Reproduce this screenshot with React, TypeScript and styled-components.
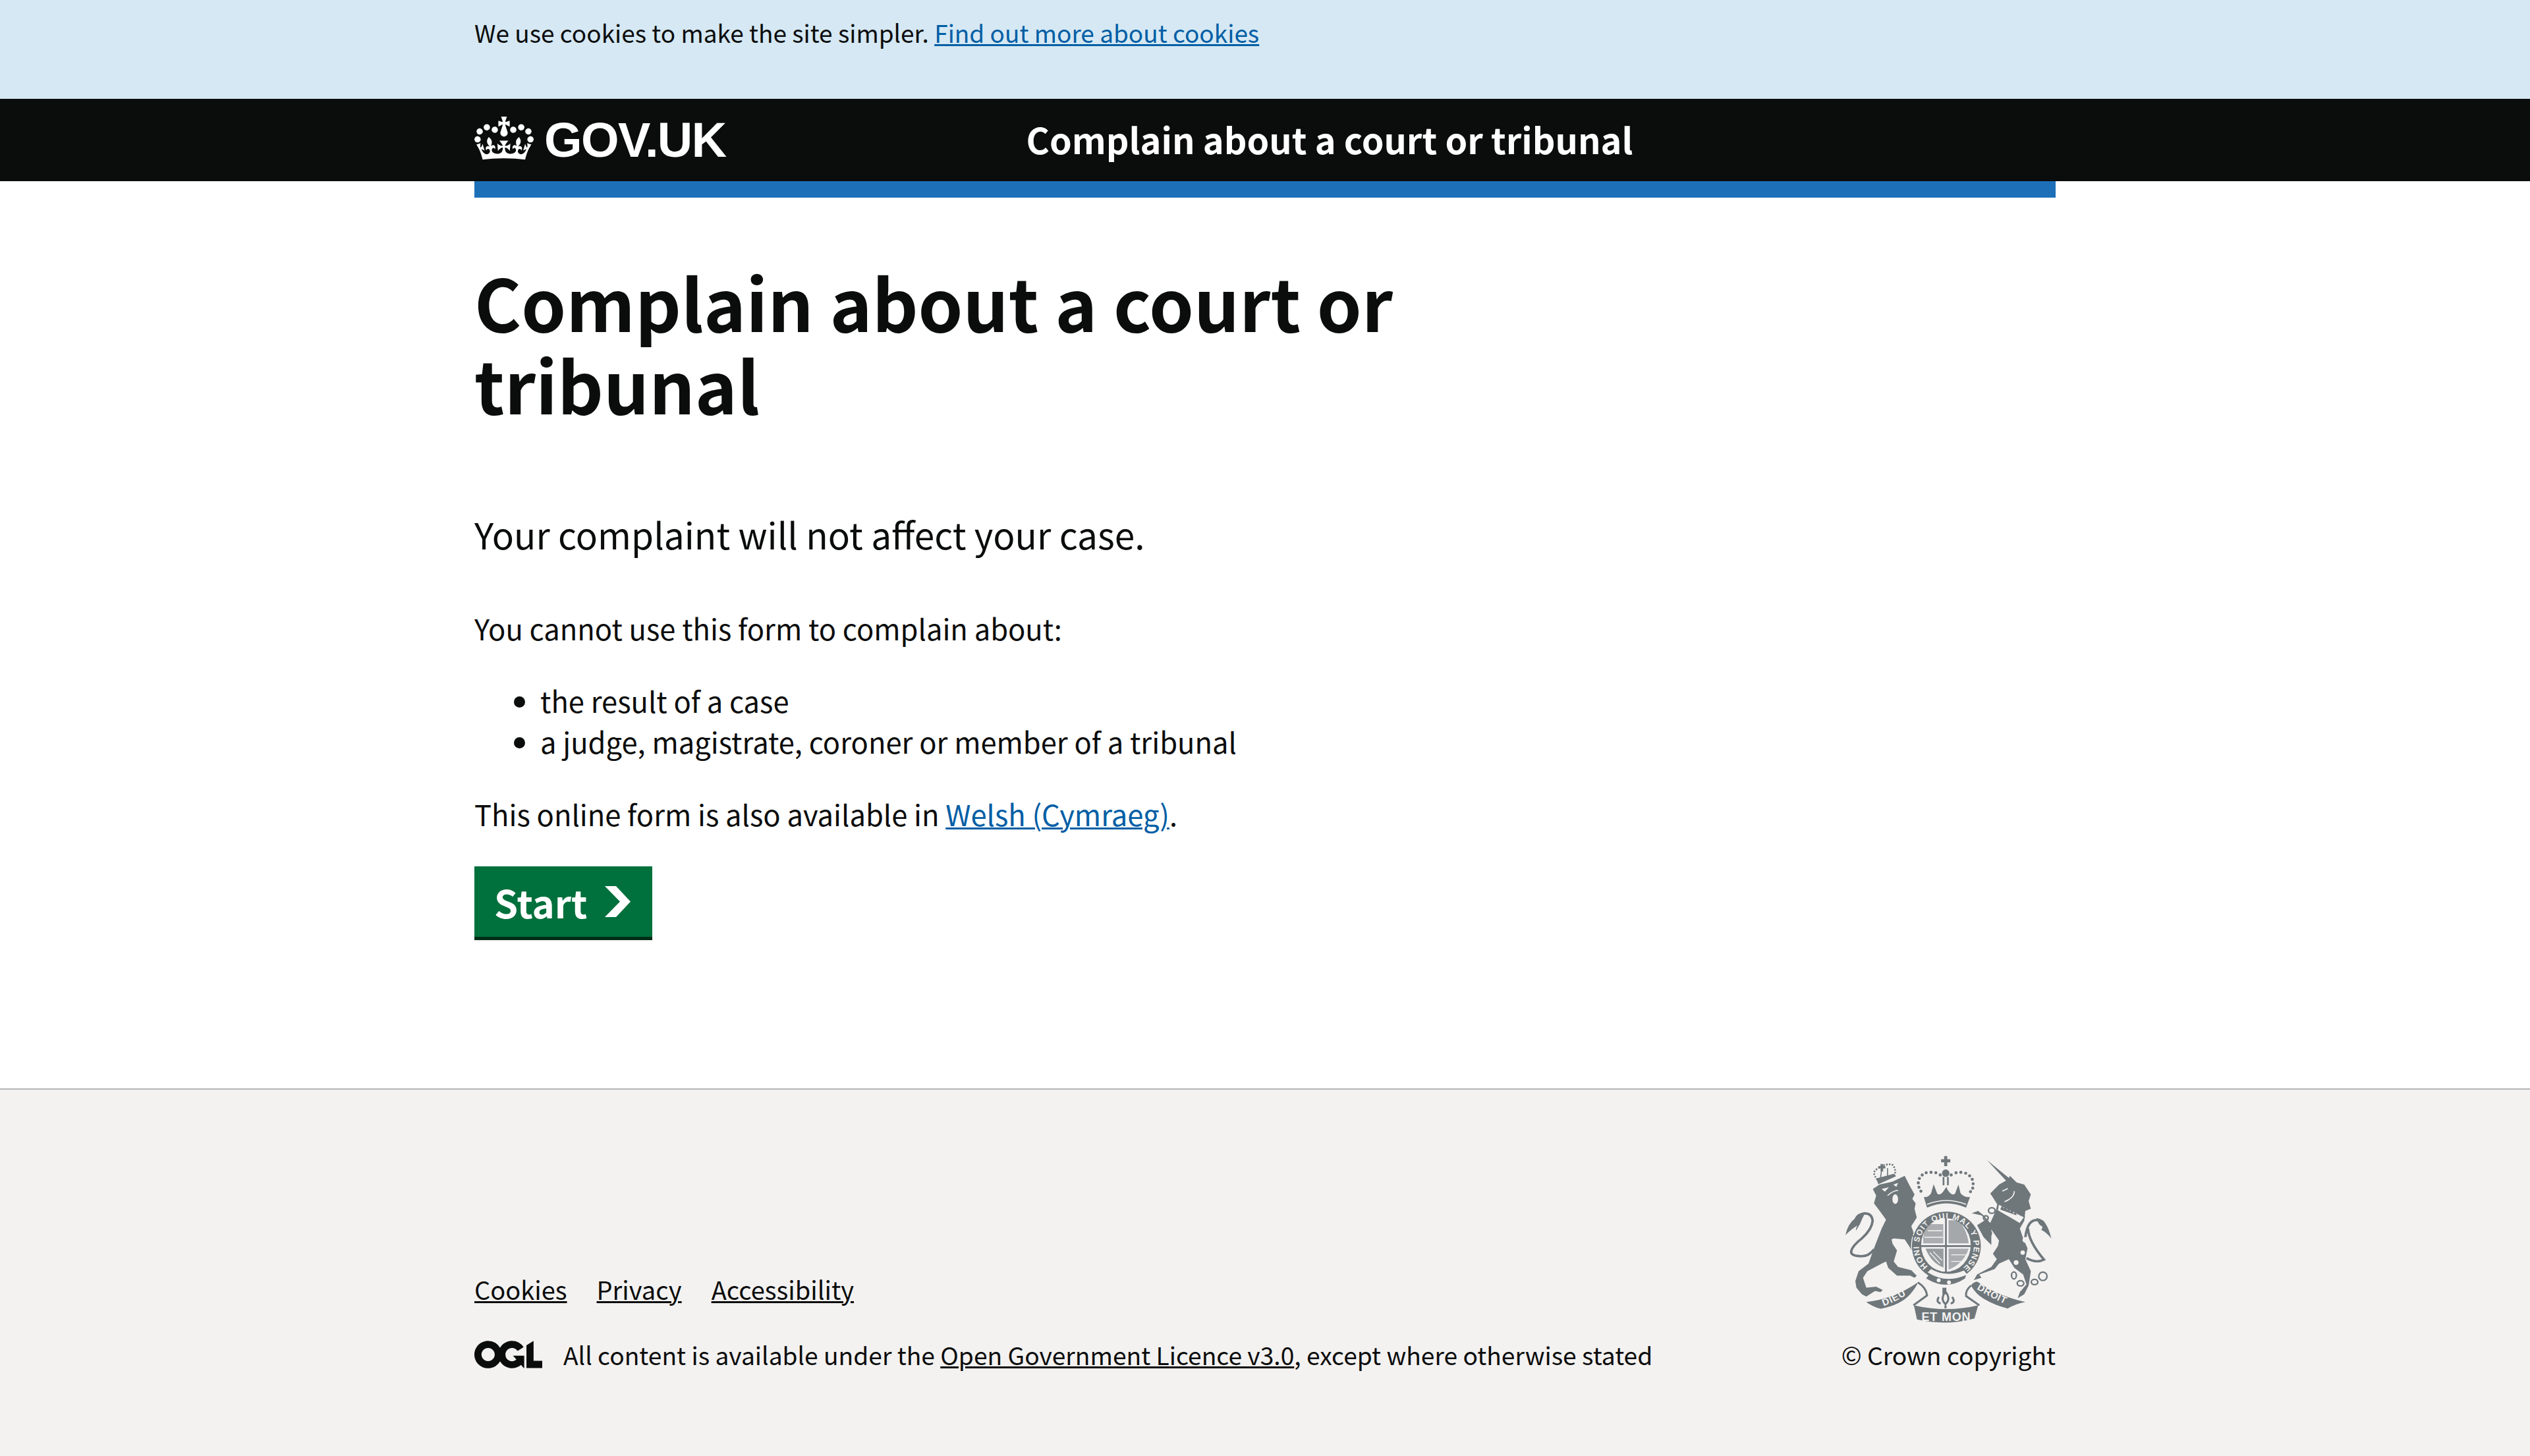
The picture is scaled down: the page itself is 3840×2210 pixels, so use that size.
import React from 'react';
import styled, { createGlobalStyle } from 'styled-components';

const GlobalStyle = createGlobalStyle`
  html, body { margin: 0; padding: 0; background: #f3f2f1; }
  body { font-family: 'Noto Sans CJK SC', 'Noto Sans', Arial, sans-serif; color: #0b0c0c; }
`;

const CROWN =
  'M25 30.2c3.5 1.5 7.7-.2 9.1-3.7 1.5-3.6-.2-7.8-3.9-9.2-3.6-1.4-7.6.3-9.1 3.9-1.4 3.5.3 7.5 3.9 9zM9 39.5c3.6 1.5 7.8-.2 9.2-3.7 1.5-3.6-.2-7.8-3.9-9.1-3.6-1.5-7.6.2-9.1 3.8-1.4 3.5.3 7.5 3.8 9zM4.4 57.2c3.5 1.5 7.7-.2 9.1-3.8 1.5-3.6-.2-7.7-3.9-9.1-3.5-1.5-7.6.3-9.1 3.8-1.4 3.5.3 7.6 3.9 9.1zm38.3-21.4c3.5 1.5 7.7-.2 9.1-3.8 1.5-3.6-.2-7.7-3.9-9.1-3.6-1.5-7.6.3-9.1 3.8-1.3 3.6.4 7.7 3.9 9.1zm64.4-5.6c-3.6 1.5-7.8-.2-9.1-3.7-1.5-3.6.2-7.8 3.8-9.2 3.6-1.4 7.7.3 9.2 3.9 1.3 3.5-.4 7.5-3.9 9zm15.9 9.3c-3.6 1.5-7.7-.2-9.1-3.7-1.5-3.6.2-7.8 3.7-9.1 3.6-1.5 7.7.2 9.2 3.8 1.5 3.5-.3 7.5-3.8 9zm4.7 17.7c-3.6 1.5-7.8-.2-9.2-3.8-1.5-3.6.2-7.7 3.9-9.1 3.6-1.5 7.7.3 9.2 3.8 1.3 3.5-.4 7.6-3.9 9.1zM89.3 35.8c-3.6 1.5-7.8-.2-9.2-3.8-1.4-3.6.2-7.7 3.9-9.1 3.6-1.5 7.7.3 9.2 3.8 1.4 3.6-.3 7.7-3.9 9.1zM69.7 17.7l8.9 4.7V9.3l-8.9 2.8c-.2-.3-.5-.6-.9-.9L72.4 0H59.6l3.5 11.2c-.3.3-.6.5-.9.9l-8.8-2.8v13.1l8.8-4.7c.3.3.6.7.9.9l-5 15.4v.1c-.2.8-.4 1.6-.4 2.4 0 4.1 3.1 7.5 7 8.1h.2c.3 0 .7.1 1 .1.4 0 .7 0 1-.1h.2c4-.6 7.1-4.1 7.1-8.1 0-.8-.1-1.7-.4-2.4V34l-5.1-15.4c.4-.2.7-.6 1-.9zM66 92.8c16.9 0 32.8 1.1 47.1 3.2 4-16.9 8.9-26.7 14-33.5l-9.6-3.4c1 4.9 1.1 7.2 0 10.2-1.5-1.4-3-4.3-4.2-8.7L108.6 76c2.8-2 5-3.2 7.5-3.3-4.4 9.4-10 11.9-13.6 11.2-4.3-.8-6.3-4.6-5.6-7.9 1-4.7 5.7-5.9 8-.5 4.3-8.7-3-11.4-7.6-8.8 7.1-7.2 7.9-13.5 2.1-21.1-8 6.1-8.1 12.3-4.5 20.8-4.7-5.4-12.1-2.5-9.5 6.2 3.4-5.2 7.9-2 7.2 3.1-.6 4.3-6.4 7.8-13.5 7.2-10.3-.9-10.9-8-11.2-13.8 2.5-.5 7.1 1.8 11 7.3L80.2 60c-4.1 4.4-8 5.3-12.3 5.4 1.4-4.4 8-11.6 8-11.6H55.5s6.4 7.2 7.9 11.6c-4.2-.1-8-1-12.3-5.4l1.4 16.4c3.9-5.5 8.5-7.7 10.9-7.3-.3 5.8-.9 12.8-11.1 13.8-7.2.6-12.9-2.9-13.5-7.2-.7-5 3.8-8.3 7.1-3.1 2.7-8.7-4.6-11.6-9.4-6.2 3.7-8.5 3.6-14.7-4.6-20.8-5.8 7.6-5 13.9 2.2 21.1-4.7-2.6-11.9.1-7.7 8.8 2.3-5.5 7.1-4.2 8.1.5.7 3.3-1.3 7.1-5.7 7.9-3.5.7-9-1.8-13.5-11.2 2.5.1 4.7 1.3 7.5 3.3l-4.7-15.4c-1.2 4.4-2.7 7.2-4.3 8.7-1.1-3-.9-5.3 0-10.2l-9.5 3.4c5 6.9 9.9 16.7 14 33.5 14.8-2.1 30.8-3.2 47.7-3.2z';

const OGL =
  'M421.5 142.8V.1l-50.7 32.3v161.1h112.4v-50.7zm-122.3-9.6A47.12 47.12 0 0 1 221 97.8c0-26 21.1-47.1 47.1-47.1 16.7 0 31.4 8.7 39.7 21.8l42.7-27.2A97.63 97.63 0 0 0 268.1 0c-36.5 0-68.3 20.1-85.1 49.7A98 98 0 0 0 97.8 0C43.9 0 0 43.9 0 97.8s43.9 97.8 97.8 97.8c36.5 0 68.3-20.1 85.1-49.7a97.76 97.76 0 0 0 149.6 25.4l19.4 22.2h3v-87.8h-80l24.3 27.5zM97.8 145c-26 0-47.1-21.1-47.1-47.1s21.1-47.1 47.1-47.1 47.2 21 47.2 47S123.8 145 97.8 145';

const footerLinks = ['Cookies', 'Privacy', 'Accessibility'];
const exclusions = ['the result of a case', 'a judge, magistrate, coroner or member of a tribunal'];

const ARMS = '#6f777b';
const PAPER = '#f3f2f1';

// beads along the crown arches
const beads = [
  [612, 196], [592, 186], [570, 184], [548, 186], [530, 196], [517, 212], [512, 232], [515, 252], [524, 270],
  [662, 196], [684, 186], [706, 184], [728, 188], [746, 200], [758, 216], [762, 236], [760, 256], [750, 272],
];

function CoatOfArms() {
  return (
    <ArmsSvg viewBox="180 108 940 765" xmlns="http://www.w3.org/2000/svg">
      {/* lion tail */}
      <path
        fill="none"
        stroke={ARMS}
        strokeWidth="11"
        d="M310 535 Q285 570 245 566 Q205 565 206 545 Q210 520 255 485 Q300 445 304 405 Q300 368 262 372"
      />
      <path fill={ARMS} d="M272 364 Q232 368 222 395 Q190 420 180 470 Q208 442 235 426 Q226 440 228 450 Q248 420 258 392 Z" />
      {/* lion */}
      <path
        fill={ARMS}
        d="M305 260 L335 240 L395 226 L450 200 L470 240 L495 285 L485 305 L500 325 L495 350 L505 390 L480 430 L510 510 L515 550 L490 555 L470 520 L450 490 L400 485 L390 490 L395 510 L415 540 L400 590 L420 615 L480 630 L505 655 L495 665 L475 655 L415 655 L375 620 L365 590 L345 600 L280 635 L260 665 L275 710 L320 705 L350 720 L340 730 L315 725 L275 750 L255 740 L230 710 L225 680 L240 635 L285 600 L310 530 L345 440 L365 400 L340 365 L310 325 L320 290 Z"
      />
      <path fill={PAPER} d="M345 260 L378 252 L360 272 Z M398 240 L420 232 L412 250 Z" />
      <ellipse cx="407" cy="306" rx="13" ry="22" fill={PAPER} />
      <path fill="none" stroke={PAPER} strokeWidth="4" d="M372 290 Q395 268 420 266" />
      {/* lion crown */}
      <path fill="none" stroke={ARMS} strokeWidth="8" strokeDasharray="7 6" d="M326 218 Q298 185 322 170 Q365 140 395 150 Q415 175 402 200" />
      <path fill={ARMS} d="M330 238 L320 212 L402 190 L410 202 Z M340 146 h12 v10 h10 v10 h-10 v14 h-12 v-14 h-10 v-10 h10 Z" />
      <path fill="none" stroke={ARMS} strokeWidth="5" d="M340 208 L345 172 M372 200 L372 165" />

      {/* unicorn tail */}
      <path
        fill="none"
        stroke={ARMS}
        strokeWidth="11"
        d="M1000 480 Q1010 395 1058 402 M1012 440 Q1015 500 1085 582 Q1050 600 1005 575"
      />
      <path fill={ARMS} d="M1050 392 Q1085 398 1092 418 Q1108 442 1118 485 Q1095 455 1072 446 Q1080 440 1076 430 Q1060 425 1050 392 Z" />
      {/* unicorn */}
      <path
        fill={ARMS}
        d="M825 128 L925 210 L930 200 L960 230 L995 240 L1025 285 L1015 315 L1025 350 L1000 360 L995 405 L975 440 L990 485 L1010 530 L1000 580 L1025 635 L1015 700 L995 740 L965 758 L975 730 L1005 695 L990 650 L950 620 L925 580 L880 600 L860 625 L790 650 L800 665 L765 675 L780 650 L845 615 L870 580 L852 555 L875 520 L880 495 L845 445 L845 515 L810 480 L780 425 L820 400 L800 380 L755 370 L785 360 L810 380 L840 415 L865 360 L872 330 L850 295 L840 280 L880 240 L912 222 Z"
      />
      <path fill="none" stroke={PAPER} strokeWidth="5" d="M950 270 Q950 300 905 318 M895 270 L920 258" />
      <path fill={PAPER} stroke={ARMS} strokeWidth="5" d="M878 328 L872 358 L975 418 L996 388 Z" />
      <path fill={ARMS} d="M888 346 l8 -12 6 14 8 -10 6 16 10 -8 4 16 10 -6 6 16 10 -6 4 14 -74 -26 Z" />
      <g fill={PAPER}>
        <circle cx="958" cy="595" r="11" />
        <circle cx="988" cy="550" r="10" />
        <circle cx="1000" cy="492" r="13" />
      </g>
      {/* chain links */}
      <g fill="none" stroke={ARMS} strokeWidth="7">
        <ellipse cx="847" cy="358" rx="15" ry="13" />
        <ellipse cx="820" cy="392" rx="11" ry="10" />
        <ellipse cx="830" cy="462" rx="15" ry="14" />
        <ellipse cx="948" cy="654" rx="11" ry="16" />
        <ellipse cx="978" cy="690" rx="15" ry="12" />
        <ellipse cx="1042" cy="684" rx="15" ry="12" />
        <circle cx="1080" cy="658" r="19" />
      </g>

      {/* shield and garter */}
      <circle cx="640" cy="520" r="161" fill={PAPER} />
      <circle cx="640" cy="520" r="157" fill={ARMS} />
      <path fill="none" stroke={ARMS} strokeWidth="5" d="M450 420 L525 530" />
      <defs>
        <path id="garter" d="M 556 613 A 125 125 0 1 1 724 613" />
        <path id="dieu" d="M 345 797 Q 420 770 490 722" />
        <path id="droit" d="M 778 716 Q 850 760 945 800" />
      </defs>
      <text fill={PAPER} fontFamily="'Liberation Sans', sans-serif" fontWeight="700" fontSize="37">
        <textPath href="#garter" textLength="610" lengthAdjust="spacing">
          HONI SOIT QUI MAL Y PENSE
        </textPath>
      </text>
      <ellipse cx="638" cy="515" rx="113" ry="122" fill={PAPER} />
      <g fill={ARMS}>
        <path d="M634 393 h8 v248 h-8 Z M525 516 h228 v8 h-228 Z" />
        <path d="M550 420 h76 v88 h-92 Q532 460 550 420 Z" opacity="0.55" />
        <path d="M650 403 h40 q40 30 52 105 h-92 Z" opacity="0.6" />
        <path d="M545 532 h82 v86 q-55 -20 -82 -86 Z" opacity="0.7" />
        <path d="M650 532 h92 q-25 70 -92 96 Z" opacity="0.55" />
      </g>
      <path fill="none" stroke={PAPER} strokeWidth="4" d="M555 450 h66 M540 480 h84 M662 560 h66 M662 590 h56 M565 550 L610 600 M580 545 L620 585" />
      {/* garter buckle */}
      <path fill={PAPER} d="M555 640 Q640 695 735 650 L720 632 Q640 665 570 625 Z" />
      <path fill={ARMS} d="M548 668 Q640 725 725 668 L730 652 Q640 695 562 648 Z" />
      <circle cx="605" cy="676" r="9" fill={PAPER} />
      <circle cx="652" cy="686" r="9" fill={PAPER} />

      {/* royal crown */}
      <path
        fill={ARMS}
        d="M537 296 L552 345 Q640 305 730 345 L748 296 Q725 300 705 280 L695 240 L680 280 Q665 295 645 262 L640 250 L632 262 Q612 295 598 280 L582 238 L570 280 Q555 300 537 296 Z"
      />
      <path fill="none" stroke={PAPER} strokeWidth="5" d="M552 330 Q640 295 730 330" />
      <g fill={ARMS}>
        {beads.map(([cx, cy]) => (
          <circle key={`${cx}-${cy}`} cx={cx} cy={cy} r="7" />
        ))}
        <rect x="623" y="205" width="8" height="38" />
        <rect x="643" y="205" width="8" height="38" />
        <circle cx="637" cy="188" r="17" />
        <path d="M630 110 h14 v14 h14 v14 h-14 v18 h-14 v-18 h-14 v-14 h14 Z" />
      </g>

      {/* motto ribbon */}
      <g fill={ARMS}>
        <path d="M275 775 Q400 762 510 686 Q505 705 475 740 Q430 790 340 806 Q300 795 275 775 Z" />
        <path d="M1000 775 Q880 750 780 682 Q760 686 752 700 Q775 740 810 760 Q860 790 920 805 Q950 785 1000 775 Z" />
        <path d="M492 790 Q640 825 785 790 L768 850 Q640 885 506 855 Z" />
      </g>
      <path fill="none" stroke={ARMS} strokeWidth="9" d="M510 686 Q548 710 552 745 L490 790 M752 700 Q725 725 730 748 L790 790" />
      <path fill={ARMS} d="M622 710 h18 v30 h-18 Z" />
      <path
        fill="none"
        stroke={ARMS}
        strokeWidth="9"
        d="M636 728 Q662 760 636 785 Q610 760 636 728 M606 752 Q590 775 614 782 M666 752 Q684 775 660 782 M636 790 v14"
      />
      <g fill={PAPER} fontFamily="'Liberation Sans', sans-serif" fontWeight="700" fontSize="44">
        <text letterSpacing="3">
          <textPath href="#dieu" startOffset="6%">
            DIEU
          </textPath>
        </text>
        <text letterSpacing="2">
          <textPath href="#droit">DROIT</textPath>
        </text>
        <text x="527" y="860" fontSize="54" textLength="222">
          ET MON
        </text>
      </g>
    </ArmsSvg>
  );
}

export default function App() {
  return (
    <Page>
      <GlobalStyle />
      <CookieBanner>
        <Container>
          We use cookies to make the site simpler. <BlueLink href="#">Find out more about cookies</BlueLink>
        </Container>
      </CookieBanner>
      <Header>
        <HeaderContainer>
          <Logo>
            <svg viewBox="0 0 132 97" width="90" height="66" xmlns="http://www.w3.org/2000/svg">
              <path fill="currentColor" fillRule="evenodd" d={CROWN} />
            </svg>
            <span>GOV.UK</span>
          </Logo>
          <ServiceName>Complain about a court or tribunal</ServiceName>
        </HeaderContainer>
      </Header>
      <Container>
        <BlueRule />
        <Main>
          <Heading>Complain about a court or tribunal</Heading>
          <Lead>Your complaint will not affect your case.</Lead>
          <Body>You cannot use this form to complain about:</Body>
          <BulletList>
            {exclusions.map((item) => (
              <li key={item}>{item}</li>
            ))}
          </BulletList>
          <Body>
            This online form is also available in <BlueLink href="#">Welsh (Cymraeg)</BlueLink>.
          </Body>
          <StartButton href="#">
            Start
            <svg viewBox="0 0 39 47" width="39" height="47" xmlns="http://www.w3.org/2000/svg">
              <polygon fill="currentColor" points="0,0 17,0 39,23.5 17,47 0,47 23,23.5" />
            </svg>
          </StartButton>
        </Main>
      </Container>
      <Footer>
        <FooterContainer>
          <FooterMeta>
            <FooterLinks>
              {footerLinks.map((link) => (
                <DarkLink href="#" key={link}>
                  {link}
                </DarkLink>
              ))}
            </FooterLinks>
            <Licence>
              <svg viewBox="0 0 483.2 195.7" width="103" height="42" xmlns="http://www.w3.org/2000/svg">
                <path fill="currentColor" d={OGL} />
              </svg>
              <span>
                All content is available under the <DarkLink href="#">Open Government Licence v3.0</DarkLink>, except
                where otherwise stated
              </span>
            </Licence>
          </FooterMeta>
          <Copyright>
            <CoatOfArms />
            <span>© Crown copyright</span>
          </Copyright>
        </FooterContainer>
      </Footer>
    </Page>
  );
}

const Page = styled.div`
  display: flex;
  flex-direction: column;
  min-height: 2210px;
  background: #fff;
`;

const Container = styled.div`
  width: 2400px;
  margin: 0 auto;
`;

const CookieBanner = styled.div`
  height: 150px;
  box-sizing: border-box;
  padding-top: 18px;
  background: #d5e8f3;
  font-size: 37px;
  line-height: 62.5px;
`;

const BlueLink = styled.a`
  color: #005ea5;
  text-decoration: underline;
  text-decoration-thickness: 3px;
`;

const DarkLink = styled.a`
  color: #0b0c0c;
  text-decoration: underline;
  text-decoration-thickness: 3px;
`;

const Header = styled.header`
  height: 125px;
  background: #0b0c0c;
  color: #fff;
`;

const HeaderContainer = styled(Container)`
  display: flex;
  align-items: center;
  height: 100%;
`;

const Logo = styled.div`
  display: flex;
  align-items: center;
  gap: 16px;
  width: 837.5px;
  flex: none;
  font-family: 'Liberation Sans', Arial, sans-serif;
  font-size: 74px;
  font-weight: 700;
  letter-spacing: -1.6px;
  svg {
    flex: none;
    margin-top: -5px;
  }
`;

const ServiceName = styled.div`
  font-size: 54px;
  font-weight: 700;
  margin-top: -4px;
`;

const BlueRule = styled.div`
  height: 25px;
  background: #1d70b8;
`;

const Main = styled.main`
  padding: 94px 0 0;
  height: 1352px;
  box-sizing: border-box;
`;

const Heading = styled.h1`
  width: 1562px;
  margin: 0 0 129px;
  font-size: 108.6px;
  line-height: 125px;
  font-weight: 700;
`;

const Lead = styled.p`
  margin: 0 0 75px;
  font-size: 55px;
  line-height: 75px;
`;

const Body = styled.p`
  margin: 0 0 48px;
  font-size: 43.5px;
  line-height: 62px;
`;

const BulletList = styled.ul`
  margin: 0 0 48px;
  padding-left: 100px;
  font-size: 43.5px;
  line-height: 62px;
`;

const StartButton = styled.a`
  display: inline-flex;
  align-items: center;
  justify-content: space-between;
  box-sizing: border-box;
  width: 270px;
  height: 107px;
  padding: 0 33px 0 30px;
  background: #00703c;
  box-shadow: 0 5px 0 #002d18;
  color: #fff;
  font-size: 58px;
  font-weight: 700;
  text-decoration: none;
`;

const Footer = styled.footer`
  flex: 1;
  background: #f3f2f1;
  border-top: 2.5px solid #b1b4b6;
`;

const FooterContainer = styled(Container)`
  display: flex;
  justify-content: space-between;
  align-items: flex-end;
  padding-top: 100px;
`;

const FooterMeta = styled.div`
  display: flex;
  flex-direction: column;
  gap: 37px;
`;

const FooterLinks = styled.div`
  display: flex;
  gap: 45px;
  font-size: 38px;
  line-height: 62.5px;
`;

const Licence = styled.div`
  display: flex;
  align-items: center;
  gap: 32px;
  font-size: 37.2px;
  line-height: 62.5px;
`;

const Copyright = styled.div`
  display: flex;
  flex-direction: column;
  align-items: center;
  gap: 16px;
  font-size: 37.2px;
  line-height: 62.5px;
`;

const ArmsSvg = styled.svg`
  width: 313px;
  height: 255px;
`;
